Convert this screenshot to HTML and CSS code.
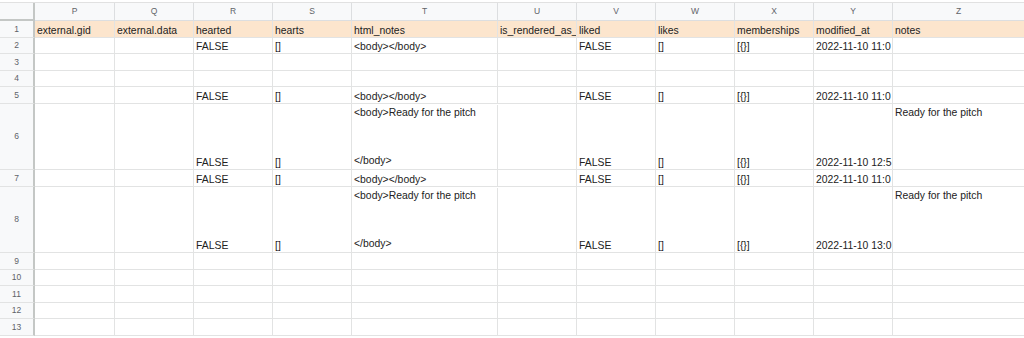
FILE: index.html
```html
<!DOCTYPE html>
<html lang="en">
<head>
    <meta charset="UTF-8">
    <title>Sheet</title>
    <link rel="stylesheet" href="styles.css">
</head>
<body>
    <div class="topbar"></div>
    <div class="sheet">
        <div class="row colhead">
            <div class="corner"></div>
            <div>P</div><div>Q</div><div>R</div><div>S</div><div>T</div><div>U</div>
            <div>V</div><div>W</div><div>X</div><div>Y</div><div>Z</div>
        </div>
        <div class="row first">
            <div class="rh">1</div>
            <div>external.gid</div><div>external.data</div><div>hearted</div><div>hearts</div>
            <div>html_notes</div><div>is_rendered_as_</div><div>liked</div><div>likes</div>
            <div>memberships</div><div>modified_at</div><div>notes</div>
        </div>
        <div class="row r16">
            <div class="rh">2</div>
            <div></div><div></div><div>FALSE</div><div>[]</div>
            <div>&lt;body&gt;&lt;/body&gt;</div><div></div><div>FALSE</div><div>[]</div>
            <div>[{}]</div><div>2022-11-10 11:0</div><div></div>
        </div>
        <div class="row">
            <div class="rh">3</div>
            <div></div><div></div><div></div><div></div><div></div><div></div>
            <div></div><div></div><div></div><div></div><div></div>
        </div>
        <div class="row r16">
            <div class="rh">4</div>
            <div></div><div></div><div></div><div></div><div></div><div></div>
            <div></div><div></div><div></div><div></div><div></div>
        </div>
        <div class="row">
            <div class="rh">5</div>
            <div></div><div></div><div>FALSE</div><div>[]</div>
            <div>&lt;body&gt;&lt;/body&gt;</div><div></div><div>FALSE</div><div>[]</div>
            <div>[{}]</div><div>2022-11-10 11:0</div><div></div>
        </div>
        <div class="row tall">
            <div class="rh">6</div>
            <div></div><div></div><div>FALSE</div><div>[]</div>
            <div class="ml">&lt;body&gt;Ready for the pitch<br>&nbsp;<br>&nbsp;<br>&lt;/body&gt;</div>
            <div></div><div>FALSE</div><div>[]</div>
            <div>[{}]</div><div>2022-11-10 12:5</div>
            <div class="ml">Ready for the pitch<br>&nbsp;<br>&nbsp;<br>&nbsp;</div>
        </div>
        <div class="row">
            <div class="rh">7</div>
            <div></div><div></div><div>FALSE</div><div>[]</div>
            <div>&lt;body&gt;&lt;/body&gt;</div><div></div><div>FALSE</div><div>[]</div>
            <div>[{}]</div><div>2022-11-10 11:0</div><div></div>
        </div>
        <div class="row tall">
            <div class="rh">8</div>
            <div></div><div></div><div>FALSE</div><div>[]</div>
            <div class="ml">&lt;body&gt;Ready for the pitch<br>&nbsp;<br>&nbsp;<br>&lt;/body&gt;</div>
            <div></div><div>FALSE</div><div>[]</div>
            <div>[{}]</div><div>2022-11-10 13:0</div>
            <div class="ml">Ready for the pitch<br>&nbsp;<br>&nbsp;<br>&nbsp;</div>
        </div>
        <div class="row">
            <div class="rh">9</div>
            <div></div><div></div><div></div><div></div><div></div><div></div>
            <div></div><div></div><div></div><div></div><div></div>
        </div>
        <div class="row r16">
            <div class="rh">10</div>
            <div></div><div></div><div></div><div></div><div></div><div></div>
            <div></div><div></div><div></div><div></div><div></div>
        </div>
        <div class="row">
            <div class="rh">11</div>
            <div></div><div></div><div></div><div></div><div></div><div></div>
            <div></div><div></div><div></div><div></div><div></div>
        </div>
        <div class="row r16">
            <div class="rh">12</div>
            <div></div><div></div><div></div><div></div><div></div><div></div>
            <div></div><div></div><div></div><div></div><div></div>
        </div>
        <div class="row">
            <div class="rh">13</div>
            <div></div><div></div><div></div><div></div><div></div><div></div>
            <div></div><div></div><div></div><div></div><div></div>
        </div>
    </div>
</body>
</html>
```

FILE: styles.css
```css
* {
    box-sizing: border-box;
}
body {
    margin: 0;
    background: #fff;
    font-family: "Liberation Sans", Arial, sans-serif;
    overflow: hidden;
}
.topbar {
    height: 3px;
    border-bottom: 1px solid #e1e1e1;
}
.sheet {
    width: 1024px;
}
.row {
    display: grid;
    grid-template-columns: 35px 80px 79px 79px 79px 146px 79px 79px 79px 79px 79px 1fr;
    height: 17px;
}
.row.r16 {
    height: 16px;
}
.row.tall {
    height: 66px;
}
.row > div {
    display: flex;
    align-items: flex-end;
    padding: 0 2px;
    border-right: 1px solid #e2e3e3;
    border-bottom: 1px solid #e2e3e3;
    overflow: hidden;
    white-space: nowrap;
    font-size: 10.4px;
    line-height: 13px;
    color: #222;
}
.row > div:last-child {
    border-right: none;
}
.row > .ml {
    display: block;
    line-height: 16px;
    align-self: end;
}
.row > .rh {
    align-items: center;
    justify-content: center;
    background: #f8f9fa;
    border-right: 2px solid #c4c7c5;
    font-size: 8.5px;
    color: #5f6368;
}
.row.first > div {
    background: #fce5cd;
}
.row.first > .rh {
    background: #f8f9fa;
}
.colhead {
    height: 18px;
    background: #f8f9fa;
}
.colhead > div {
    align-items: center;
    justify-content: center;
    border-right: 1px solid #dcdee0;
    border-bottom: 1px solid #dcdee0;
    font-size: 8.5px;
    color: #5f6368;
}
.colhead > .corner {
    border-right: 2px solid #c4c7c5;
    border-bottom: 2px solid #c4c7c5;
}
```
